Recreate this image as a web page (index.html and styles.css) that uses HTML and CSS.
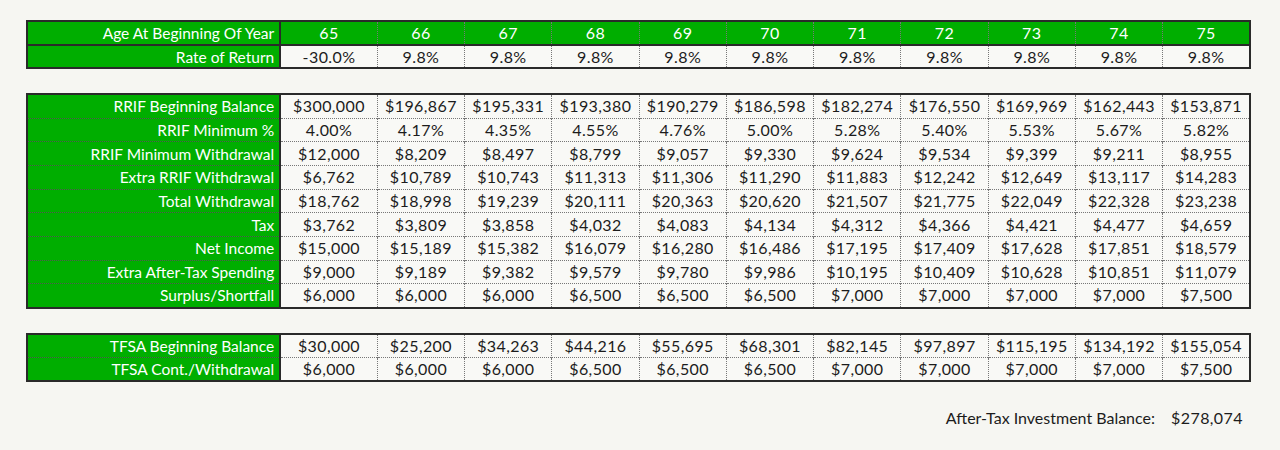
FILE: index.html
```html
<!DOCTYPE html>
<html>
<head>
<meta charset="utf-8">
<link rel="stylesheet" href="styles.css">
</head>
<body>
<div class="sheet">
  <table class="grid">
    <colgroup><col class="c-label"><col class="c-first"><col span="10" class="c-data"></colgroup>
    <tr class="head">
      <th>Age At Beginning Of Year</th><td>65</td><td>66</td><td>67</td><td>68</td><td>69</td><td>70</td><td>71</td><td>72</td><td>73</td><td>74</td><td>75</td>
    </tr>
    <tr class="solid-top">
      <th>Rate of Return</th><td>-30.0%</td><td>9.8%</td><td>9.8%</td><td>9.8%</td><td>9.8%</td><td>9.8%</td><td>9.8%</td><td>9.8%</td><td>9.8%</td><td>9.8%</td><td>9.8%</td>
    </tr>
  </table>

  <table class="grid">
    <colgroup><col class="c-label"><col class="c-first"><col span="10" class="c-data"></colgroup>
    <tr><th>RRIF Beginning Balance</th><td>$300,000</td><td>$196,867</td><td>$195,331</td><td>$193,380</td><td>$190,279</td><td>$186,598</td><td>$182,274</td><td>$176,550</td><td>$169,969</td><td>$162,443</td><td>$153,871</td></tr>
    <tr><th>RRIF Minimum %</th><td>4.00%</td><td>4.17%</td><td>4.35%</td><td>4.55%</td><td>4.76%</td><td>5.00%</td><td>5.28%</td><td>5.40%</td><td>5.53%</td><td>5.67%</td><td>5.82%</td></tr>
    <tr><th>RRIF Minimum Withdrawal</th><td>$12,000</td><td>$8,209</td><td>$8,497</td><td>$8,799</td><td>$9,057</td><td>$9,330</td><td>$9,624</td><td>$9,534</td><td>$9,399</td><td>$9,211</td><td>$8,955</td></tr>
    <tr><th>Extra RRIF Withdrawal</th><td>$6,762</td><td>$10,789</td><td>$10,743</td><td>$11,313</td><td>$11,306</td><td>$11,290</td><td>$11,883</td><td>$12,242</td><td>$12,649</td><td>$13,117</td><td>$14,283</td></tr>
    <tr><th>Total Withdrawal</th><td>$18,762</td><td>$18,998</td><td>$19,239</td><td>$20,111</td><td>$20,363</td><td>$20,620</td><td>$21,507</td><td>$21,775</td><td>$22,049</td><td>$22,328</td><td>$23,238</td></tr>
    <tr><th>Tax</th><td>$3,762</td><td>$3,809</td><td>$3,858</td><td>$4,032</td><td>$4,083</td><td>$4,134</td><td>$4,312</td><td>$4,366</td><td>$4,421</td><td>$4,477</td><td>$4,659</td></tr>
    <tr><th>Net Income</th><td>$15,000</td><td>$15,189</td><td>$15,382</td><td>$16,079</td><td>$16,280</td><td>$16,486</td><td>$17,195</td><td>$17,409</td><td>$17,628</td><td>$17,851</td><td>$18,579</td></tr>
    <tr><th>Extra After-Tax Spending</th><td>$9,000</td><td>$9,189</td><td>$9,382</td><td>$9,579</td><td>$9,780</td><td>$9,986</td><td>$10,195</td><td>$10,409</td><td>$10,628</td><td>$10,851</td><td>$11,079</td></tr>
    <tr><th>Surplus/Shortfall</th><td>$6,000</td><td>$6,000</td><td>$6,000</td><td>$6,500</td><td>$6,500</td><td>$6,500</td><td>$7,000</td><td>$7,000</td><td>$7,000</td><td>$7,000</td><td>$7,500</td></tr>
  </table>

  <table class="grid">
    <colgroup><col class="c-label"><col class="c-first"><col span="10" class="c-data"></colgroup>
    <tr><th>TFSA Beginning Balance</th><td>$30,000</td><td>$25,200</td><td>$34,263</td><td>$44,216</td><td>$55,695</td><td>$68,301</td><td>$82,145</td><td>$97,897</td><td>$115,195</td><td>$134,192</td><td>$155,054</td></tr>
    <tr><th>TFSA Cont./Withdrawal</th><td>$6,000</td><td>$6,000</td><td>$6,000</td><td>$6,500</td><td>$6,500</td><td>$6,500</td><td>$7,000</td><td>$7,000</td><td>$7,000</td><td>$7,000</td><td>$7,500</td></tr>
  </table>

  <div class="summary">
    <span class="summary-label">After-Tax Investment Balance:</span>
    <span class="summary-value">$278,074</span>
  </div>
</div>
</body>
</html>
```

FILE: styles.css
```css
html, body {
  margin: 0;
  padding: 0;
  background: #f6f6f2;
}

.sheet {
  padding: 20px 0 0 26px;
  font-family: Lato, "Liberation Sans", sans-serif;
  font-size: 16px;
  color: #1c1c1c;
}

.grid {
  border-collapse: collapse;
  table-layout: fixed;
  width: 1225px;
  border: 2px solid #2a2a2a;
  margin-bottom: 24px;
}

.c-label { width: 253px; }
.c-first { width: 97px; }
.c-data { width: 87.2px; }

.grid th,
.grid td {
  height: 23.7px;
  padding: 0;
  line-height: 18px;
  white-space: nowrap;
  box-sizing: border-box;
}

.grid th {
  background: #00ae00;
  color: #ffffff;
  font-weight: normal;
  font-size: 15.5px;
  text-align: right;
  padding-right: 5px;
  border-right: 2px solid #2a2a2a;
  border-top: 1px dotted #555;
}

.grid td {
  background: #f9f9f6;
  text-align: center;
  letter-spacing: 0.4px;
  border-left: 1px dotted #777;
  border-top: 1px dotted #777;
}

.grid tr:first-child th,
.grid tr:first-child td {
  border-top: none;
}

.grid th + td {
  border-left: 2px solid #2a2a2a;
}

.head td {
  background: #00ae00;
  color: #ffffff;
}

.solid-top th,
.solid-top td {
  border-top: 2px solid #2a2a2a;
}

.summary {
  display: flex;
  justify-content: flex-end;
  align-items: center;
  width: 1225px;
  height: 24px;
  margin-top: 21px;
}

.summary-label {
  font-size: 16px;
  padding-right: 8px;
}

.summary-value {
  width: 88px;
  text-align: center;
  letter-spacing: 0.4px;
}
```
